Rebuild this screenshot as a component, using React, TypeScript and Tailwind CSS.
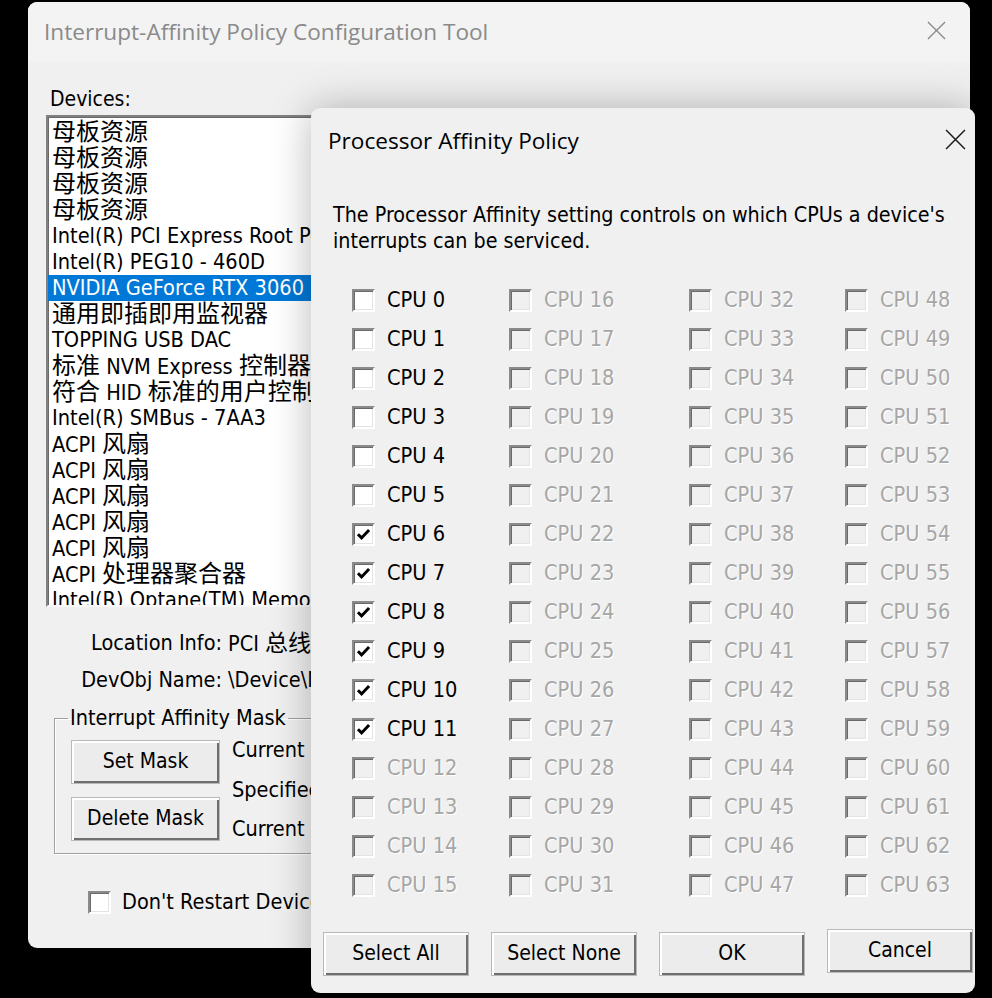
import React from 'react';

const ui = "font-['DejaVu_Sans_Condensed','DejaVu_Sans','Noto_Sans_CJK_SC',sans-serif] [font-stretch:condensed]";
const titleFont = "font-['Open_Sans','Noto_Sans',sans-serif] [font-stretch:normal]";

const devices = [
  '母板资源',
  '母板资源',
  '母板资源',
  '母板资源',
  'Intel(R) PCI Express Root Port #1 - 7ABC',
  'Intel(R) PEG10 - 460D',
  'NVIDIA GeForce RTX 3060',
  '通用即插即用监视器',
  'TOPPING USB DAC',
  '标准 NVM Express 控制器',
  '符合 HID 标准的用户控制设备',
  'Intel(R) SMBus - 7AA3',
  'ACPI 风扇',
  'ACPI 风扇',
  'ACPI 风扇',
  'ACPI 风扇',
  'ACPI 风扇',
  'ACPI 处理器聚合器',
  'Intel(R) Optane(TM) Memory and Storage Management Component',
];

// CJK glyphs in the list are drawn noticeably larger than the Latin text
function Mixed({ text }: { text: string }) {
  const parts = text.split(/([\u3000-\u9fff]+)/);
  return (
    <>
      {parts.map((p, i) =>
        /[\u3000-\u9fff]/.test(p) ? (
          <span key={i} className="text-[24px]">{p}</span>
        ) : (
          <span key={i}>{p}</span>
        ),
      )}
    </>
  );
}

function CloseIcon({ className }: { className?: string }) {
  return (
    <svg viewBox="0 0 20 20" className={className} fill="none" stroke="currentColor" strokeWidth={1.4}>
      <path d="M1 1L19 19M19 1L1 19" />
    </svg>
  );
}

function Check({ checked, disabled }: { checked?: boolean; disabled?: boolean }) {
  return (
    <span
      className={`flex h-[23px] w-[23px] shrink-0 items-center justify-center border-2 border-t-[#8a8a8a] border-l-[#8a8a8a] border-b-white border-r-white shadow-[inset_1px_1px_0_#6a6a6a,inset_-1px_-1px_0_#e3e3e3] ${disabled ? 'bg-[#f0f0f0]' : 'bg-white'}`}
    >
      {checked && (
        <svg viewBox="0 0 14 14" className="h-[15px] w-[15px]" fill="none" stroke="#000" strokeWidth={2.8}>
          <path d="M1.8 6.8L5.2 10.2L12.2 2.8" />
        </svg>
      )}
    </span>
  );
}

function Btn({ children, className = '' }: { children: React.ReactNode; className?: string }) {
  return (
    <button
      className={`h-[44px] border border-[#b9b9b9] bg-[#ececec] text-[21px] text-black shadow-[inset_2px_2px_0_#ffffff,inset_-2px_-2px_0_#6f6f6f] ${className}`}
    >
      {children}
    </button>
  );
}

function MainWindow() {
  return (
    <div className={`absolute left-[28px] top-[2px] flex h-[946px] w-[942px] flex-col overflow-hidden rounded-[9px] bg-[#f0f0f0] ${ui}`}>
      <div className="flex h-[60px] shrink-0 items-center justify-between bg-[#f3f3f3] pl-[16px] pr-[24px]">
        <span className={`text-[22.6px] text-[#8a8a8a] ${titleFont}`}>Interrupt-Affinity Policy Configuration Tool</span>
        <CloseIcon className="-mt-[3px] h-[19px] w-[19px] text-[#8a8a8a]" />
      </div>
      <div className="flex flex-col pl-[18px] pr-[20px]">
        <div className="mt-[25px] ml-[4px] h-[24px] text-[21px] leading-[24px] text-black">Devices:</div>
        <div className="mt-[4px] h-[492px] overflow-hidden border-2 border-t-[#808080] border-l-[#808080] border-b-[#f8f8f8] border-r-[#f8f8f8] bg-white pt-[2px] shadow-[inset_1px_1px_0_#6a6a6a]">
          {devices.map((d, i) => (
            <div
              key={i}
              className={`h-[26px] whitespace-nowrap pl-[4px] text-[21.6px] leading-[26px] ${i === 6 ? 'bg-[#0078d7] text-white' : 'text-black'}`}
            >
              <Mixed text={d} />
            </div>
          ))}
        </div>
        <div className="mt-[24px] grid grid-cols-[176px_1fr] gap-x-[6px] gap-y-[12px] text-[21.5px] leading-[24px] text-black">
          <span className="text-right">Location Info:</span>
          <span className="whitespace-nowrap">
            PCI <span className="text-[23px]">总线</span> 1
          </span>
          <span className="text-right">DevObj Name:</span>
          <span className="whitespace-nowrap">\Device\NTPNP_PCI0015</span>
        </div>
        <fieldset className="mt-[14px] ml-[8px] border border-[#a0a0a0] pl-[16px] pr-[16px] pb-[12px] pt-[10px] shadow-[inset_1px_1px_0_#ffffff,1px_1px_0_#ffffff]">
          <legend className="-ml-[3px] px-[2px] text-[21.5px] leading-[24px] text-black">Interrupt Affinity Mask</legend>
          <div className="flex gap-[12px]">
            <div className="flex flex-col gap-[13px]">
              <Btn className="w-[149px]">Set Mask</Btn>
              <Btn className="w-[149px]">Delete Mask</Btn>
            </div>
            <div className="flex flex-col gap-[16px] text-[21.5px] leading-[24px] text-black">
              <span className="-mt-[2px] whitespace-nowrap">Current Mask: 0x0FC0</span>
              <span className="whitespace-nowrap">Specified Mask: 0x0FC0</span>
              <span className="-mt-[1px] whitespace-nowrap">Current Policy: IrqPolicySpecifiedProcessors</span>
            </div>
          </div>
        </fieldset>
        <div className="mt-[36px] ml-[42px] flex items-center gap-[11px] text-[21.5px] leading-[24px] text-black">
          <Check />
          <span>Don&apos;t Restart Device</span>
        </div>
      </div>
    </div>
  );
}

function AffinityDialog() {
  const cpus = Array.from({ length: 64 }, (_, i) => i);
  return (
    <div className={`absolute left-[311px] top-[108px] flex h-[885px] w-[664px] flex-col rounded-[9px] bg-[#f0f0f0] shadow-[0_0_40px_rgba(0,0,0,0.28)] ${ui}`}>
      <div className="flex h-[66px] shrink-0 items-center justify-between pl-[17px] pr-[9px]">
        <span className={`text-[22.6px] text-black ${titleFont}`}>Processor Affinity Policy</span>
        <CloseIcon className="-mt-[3px] h-[21px] w-[21px] text-[#1a1a1a]" />
      </div>
      <p className="mt-[28px] pl-[22px] pr-[10px] text-[21.3px] leading-[26px] text-black">
        The Processor Affinity setting controls on which CPUs a device&apos;s interrupts can be serviced.
      </p>
      <div className="mt-[27px] grid grid-flow-col grid-cols-[157px_180px_156px_1fr] grid-rows-[repeat(16,39px)] pl-[41px]">
        {cpus.map((n) => {
          const disabled = n > 11;
          const checked = n >= 6 && n <= 11;
          return (
            <div key={n} className="flex items-center gap-[12px]">
              <Check checked={checked} disabled={disabled} />
              <span
                className={`text-[21.6px] ${disabled ? 'text-[#a6a6a6] [text-shadow:1px_1px_0_#ffffff]' : 'text-black'}`}
              >
                CPU {n}
              </span>
            </div>
          );
        })}
      </div>
      <div className="mt-[27px] flex items-start gap-[22px] pl-[12px]">
        <Btn className="w-[146px]">Select All</Btn>
        <Btn className="w-[146px]">Select None</Btn>
        <Btn className="w-[146px]">OK</Btn>
        <Btn className="-mt-[3px] w-[146px]">Cancel</Btn>
      </div>
    </div>
  );
}

export default function App() {
  return (
    <div className="relative h-[998px] w-[992px] overflow-hidden bg-black">
      <MainWindow />
      <AffinityDialog />
    </div>
  );
}
